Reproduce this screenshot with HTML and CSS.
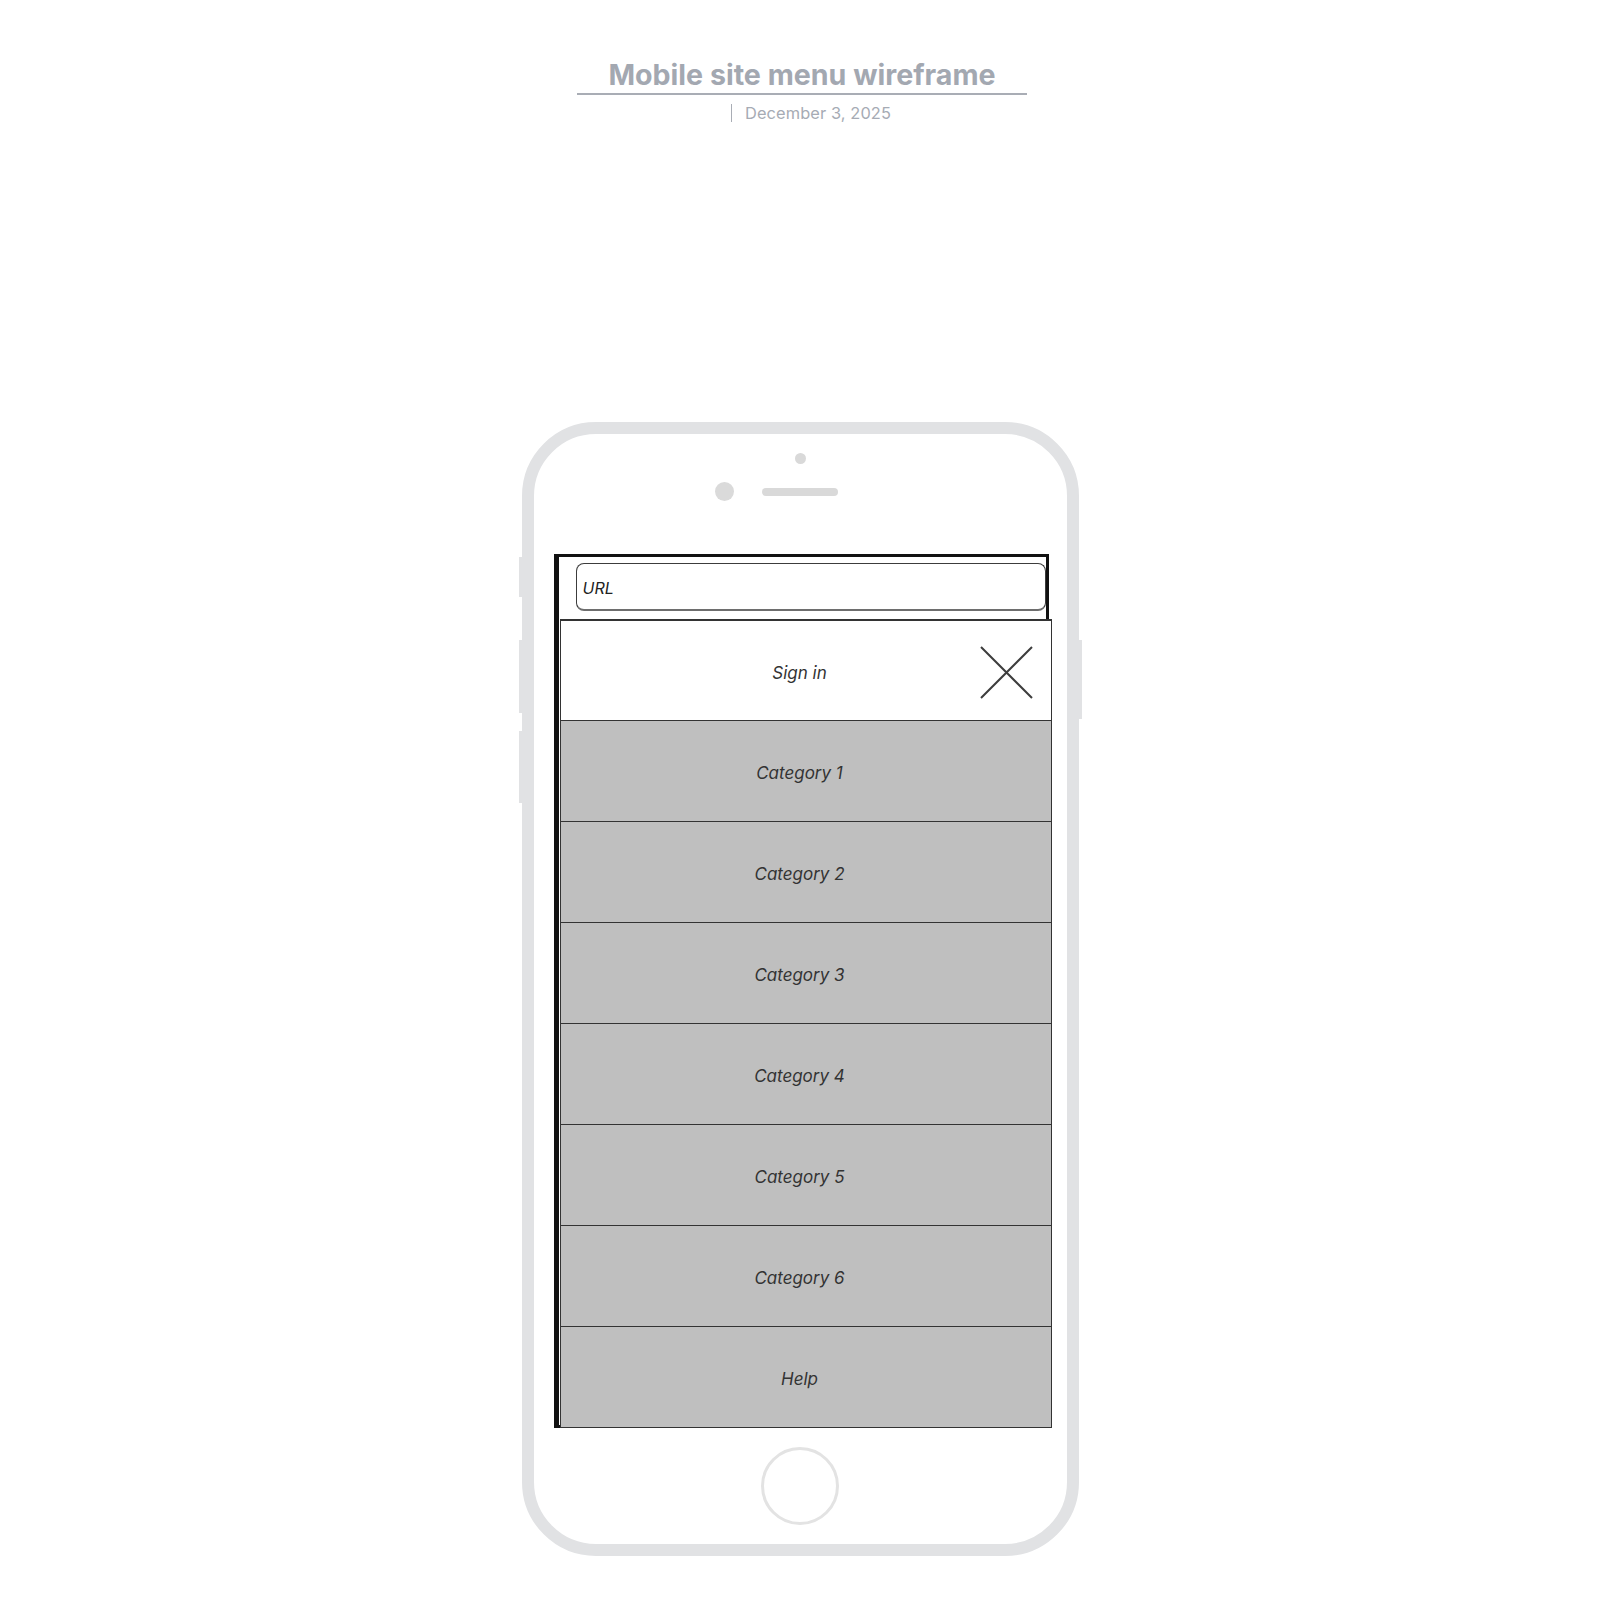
FILE: index.html
```html
<!DOCTYPE html>
<html>
<head>
<meta charset="utf-8">
<link rel="stylesheet" href="styles.css">
</head>
<body>
<header class="header">
  <h1 class="title">Mobile site menu wireframe</h1>
  <div class="date-row"><span class="date-bar"></span><span class="date">December 3, 2025</span></div>
</header>
<div class="phone">
  <span class="side-btn side-l1"></span>
  <span class="side-btn side-l2"></span>
  <span class="side-btn side-l3"></span>
  <span class="side-btn side-r1"></span>
  <div class="camera"></div>
  <div class="speaker-row"><span class="sensor"></span><span class="speaker"></span></div>
  <div class="screen">
    <div class="url-box">URL</div>
    <div class="menu">
      <div class="row row-signin">Sign in
        <svg class="close" width="53" height="53" viewBox="0 0 53 53"><path d="M1 1 L52 52 M52 1 L1 52" stroke="#3d3d3d" stroke-width="2" fill="none"/></svg>
      </div>
      <div class="row">Category 1</div>
      <div class="row">Category 2</div>
      <div class="row">Category 3</div>
      <div class="row">Category 4</div>
      <div class="row">Category 5</div>
      <div class="row">Category 6</div>
      <div class="row">Help</div>
    </div>
  </div>
  <div class="home"></div>
</div>
</body>
</html>
```
FILE: styles.css
```css
html, body {
  margin: 0;
  padding: 0;
  background: #ffffff;
  font-family: Inter, "Noto Sans", "Liberation Sans", sans-serif;
}

.header {
  padding-top: 58px;
  display: flex;
  flex-direction: column;
  align-items: center;
}

.title {
  margin: 0 0 0 4px;
  width: 450px;
  text-align: center;
  font-size: 28.6px;
  line-height: 34px;
  font-weight: 700;
  color: #a3a8b1;
  padding-bottom: 1px;
  border-bottom: 2px solid #a9adb5;
}

.date-row {
  margin-top: 9px;
  margin-left: 22px;
  display: flex;
  align-items: center;
  height: 18px;
}

.date-bar {
  width: 1px;
  height: 18px;
  background: #a9adb5;
  margin-right: 13px;
}

.date {
  font-size: 16.4px;
  line-height: 18px;
  color: #a6abb4;
  letter-spacing: 0.1px;
}

.phone {
  position: relative;
  box-sizing: border-box;
  width: 557px;
  height: 1134px;
  margin: 300px auto 0;
  border: 12px solid #e1e2e4;
  border-radius: 74px;
  display: flex;
  flex-direction: column;
  align-items: center;
}

.side-btn {
  position: absolute;
  width: 3px;
  background: #e1e2e4;
}
.side-l1 { left: -15px; top: 123px; height: 40px; }
.side-l2 { left: -15px; top: 206px; height: 73px; }
.side-l3 { left: -15px; top: 297px; height: 72px; }
.side-r1 { left: 545px; top: 206px; height: 79px; }

.camera {
  margin-top: 19px;
  width: 11px;
  height: 11px;
  border-radius: 50%;
  background: #d9d9d9;
}

.speaker-row {
  margin-top: 18px;
  margin-right: 48px;
  display: flex;
  align-items: center;
  gap: 28px;
  height: 19px;
}

.sensor {
  width: 19px;
  height: 19px;
  border-radius: 50%;
  background: #dadada;
}

.speaker {
  width: 76px;
  height: 8px;
  border-radius: 4px;
  background: #d9d9d9;
}

.screen {
  box-sizing: border-box;
  margin-top: 53px;
  margin-left: 2px;
  width: 495px;
  height: 874px;
  border-style: solid;
  border-color: #111111;
  border-width: 3px 3px 3px 5px;
  padding: 6px 0 0 17px;
  background: #ffffff;
}

.url-box {
  box-sizing: border-box;
  width: 470px;
  height: 48px;
  border: 1px solid #3c3c3c;
  border-bottom: 2px solid #6e6e6e;
  border-radius: 8px;
  padding-left: 6px;
  padding-top: 2px;
  display: flex;
  align-items: center;
  font-size: 16px;
  font-style: italic;
  color: #222222;
}

.menu {
  box-sizing: border-box;
  margin-top: 8px;
  margin-left: -16px;
  width: 492px;
  border: 1px solid #333333;
  border-top-width: 2px;
}

.row {
  position: relative;
  box-sizing: border-box;
  height: 101px;
  border-top: 1px solid #333333;
  background: #bfbfbf;
  display: flex;
  align-items: center;
  justify-content: center;
  padding-right: 12px;
  padding-top: 4px;
  font-size: 17px;
  font-style: italic;
  color: #333333;
}

.row-signin {
  height: 99px;
  border-top: none;
  background: #ffffff;
  padding-top: 4px;
}

.close {
  position: absolute;
  right: 18px;
  top: 25px;
}

.home {
  margin-top: 19px;
  box-sizing: border-box;
  width: 78px;
  height: 78px;
  border-radius: 50%;
  border: 3px solid #e3e3e3;
}
```
